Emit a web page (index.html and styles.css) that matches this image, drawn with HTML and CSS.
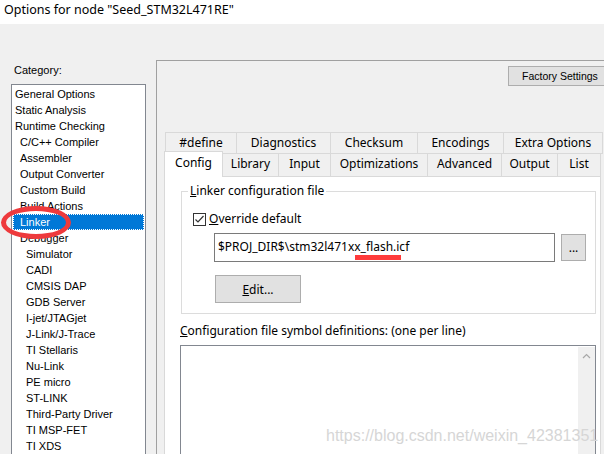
FILE: index.html
```html
<!DOCTYPE html>
<html lang="en">
<head>
    <meta charset="UTF-8">
    <title>Options for node</title>
    <link rel="stylesheet" href="styles.css">
</head>
<body>
<div class="title">Options for node "Seed_STM32L471RE"</div>
<div class="main">
    <div class="category">
        <div class="cat-label">Category:</div>
        <ul class="cat-list">
            <li>General Options</li>
            <li>Static Analysis</li>
            <li>Runtime Checking</li>
            <li class="lv1">C/C++ Compiler</li>
            <li class="lv1">Assembler</li>
            <li class="lv1">Output Converter</li>
            <li class="lv1">Custom Build</li>
            <li class="lv1">Build Actions</li>
            <li class="lv1 sel">Linker</li>
            <li class="lv1">Debugger</li>
            <li class="lv2">Simulator</li>
            <li class="lv2">CADI</li>
            <li class="lv2">CMSIS DAP</li>
            <li class="lv2">GDB Server</li>
            <li class="lv2">I-jet/JTAGjet</li>
            <li class="lv2">J-Link/J-Trace</li>
            <li class="lv2">TI Stellaris</li>
            <li class="lv2">Nu-Link</li>
            <li class="lv2">PE micro</li>
            <li class="lv2">ST-LINK</li>
            <li class="lv2">Third-Party Driver</li>
            <li class="lv2">TI MSP-FET</li>
            <li class="lv2">TI XDS</li>
        </ul>
    </div>
    <div class="panel">
        <div class="panel-top">
            <button class="btn factory">Factory Settings</button>
        </div>
        <div class="tabs">
            <div class="tab-row back">
                <div class="tab" style="width:72px">#define</div>
                <div class="tab" style="width:95px">Diagnostics</div>
                <div class="tab" style="width:88px">Checksum</div>
                <div class="tab" style="width:87px">Encodings</div>
                <div class="tab" style="width:100px">Extra Options</div>
            </div>
            <div class="tab-row front">
                <div class="tab active" style="width:59px">Config</div>
                <div class="tab" style="width:57px">Library</div>
                <div class="tab" style="width:53px">Input</div>
                <div class="tab" style="width:98px">Optimizations</div>
                <div class="tab" style="width:75px">Advanced</div>
                <div class="tab" style="width:57px">Output</div>
                <div class="tab" style="width:44px">List</div>
            </div>
            <div class="tab-page">
                <fieldset class="group">
                    <legend><u>L</u>inker configuration file</legend>
                    <div class="check-row">
                        <span class="check">
                            <svg width="11" height="11" viewBox="0 0 11 11"><path d="M1.5 5.5 L4 8 L9.5 2" fill="none" stroke="#333" stroke-width="1.2"/></svg>
                        </span>
                        <span><u>O</u>verride default</span>
                    </div>
                    <div class="path-row">
                        <div class="path">$PROJ_DIR$\stm32l471xx<span class="mark">_flash</span>.icf</div>
                        <button class="btn dots">...</button>
                    </div>
                    <button class="btn edit"><u>E</u>dit...</button>
                </fieldset>
                <div class="defs-label"><u>C</u>onfiguration file symbol definitions: (one per line)</div>
                <div class="defs-box">
                    <div class="scroll">
                        <svg width="9" height="6" viewBox="0 0 9 6"><path d="M1 5 L4.5 1.5 L8 5" fill="none" stroke="#a8a8a8" stroke-width="1.2"/></svg>
                    </div>
                </div>
            </div>
        </div>
    </div>
</div>
<div class="circle"></div>
<div class="watermark">https://blog.csdn.net/weixin_42381351</div>
</body>
</html>
```

FILE: styles.css
```css
body {
    margin: 0;
    width: 604px;
    height: 454px;
    overflow: hidden;
    position: relative;
    background-color: #f0f0f0;
    font-family: "Noto Sans", sans-serif;
    font-size: 12px;
    color: #000;
}

.title {
    height: 24px;
    background-color: #fff;
    padding-left: 4px;
    font-size: 12.5px;
    line-height: 20px;
}

.main {
    display: flex;
    align-items: flex-start;
    height: 430px;
    overflow: hidden;
}

/* left column */
.category {
    margin-left: 11px;
    margin-top: 38px;
    width: 135px;
    flex: none;
}

.cat-label {
    padding-left: 3px;
    line-height: 16px;
    font-family: "Liberation Sans", sans-serif;
    font-size: 11px;
}

.cat-list {
    list-style: none;
    margin: 6px 0 0 0;
    padding: 1px;
    height: 400px;
    background-color: #fff;
    border: 1px solid #828790;
    font-family: "Liberation Sans", sans-serif;
    font-size: 11px;
    line-height: 16px;
}

.cat-list li {
    padding-left: 2px;
    white-space: nowrap;
}

.cat-list li.lv1 {
    padding-left: 7px;
}

.cat-list li.lv2 {
    padding-left: 13px;
}

.cat-list li.sel {
    background-color: #0078d7;
    color: #fff;
    outline: 1px dotted #fff;
    outline-offset: -1px;
}

/* right panel */
.panel {
    margin-left: 10px;
    margin-top: 36px;
    width: 460px;
    height: 420px;
    flex: none;
    border: 1px solid #a0a0a0;
}

.panel-top {
    padding-top: 5px;
    padding-left: 351px;
}

.btn {
    display: block;
    box-sizing: border-box;
    margin: 0;
    padding: 0;
    background-color: #e1e1e1;
    border: 1px solid #adadad;
    font-family: "Noto Sans", sans-serif;
    font-size: 12px;
    color: #000;
}

.factory {
    width: 100px;
    height: 20px;
    padding-left: 13px;
    text-align: left;
    white-space: nowrap;
    font-family: "Liberation Sans", sans-serif;
    font-size: 10.5px;
}

.tabs {
    margin-top: 46px;
    margin-left: 7px;
}

.tab-row {
    display: flex;
    height: 22px;
}

.tab-row.back {
    margin-left: 1px;
}

.tab-row.front {
    margin-top: -1px;
    height: 24px;
}

.tab {
    box-sizing: border-box;
    flex: none;
    height: 100%;
    margin-left: -1px;
    border: 1px solid #d9d9d9;
    background-color: #f0f0f0;
    text-align: center;
    line-height: 20px;
    white-space: nowrap;
}

.tab:first-child {
    margin-left: 0;
}

.tab.active {
    position: relative;
    z-index: 1;
    height: 26px;
    margin-top: -2px;
    background-color: #fff;
    border-bottom: none;
    line-height: 21px;
}

.tab-page {
    box-sizing: border-box;
    width: 437px;
    height: 300px;
    margin-top: -1px;
    padding-top: 6px;
    background-color: #fff;
    border: 1px solid #d9d9d9;
}

.group {
    box-sizing: border-box;
    width: 415px;
    margin: 0 0 0 16px;
    padding: 0 0 10px 11px;
    border: 1px solid #dcdcdc;
}

.group legend {
    margin-left: -5px;
    padding: 0 2px;
    line-height: 16px;
}

.check-row {
    display: flex;
    align-items: center;
    gap: 3px;
    margin-top: 12px;
    line-height: 16px;
}

.check {
    box-sizing: border-box;
    width: 13px;
    height: 13px;
    display: flex;
    align-items: center;
    justify-content: center;
    background-color: #fff;
    border: 1px solid #333;
}

.path-row {
    display: flex;
    margin-top: 6px;
    margin-left: 21px;
}

.path {
    box-sizing: border-box;
    width: 341px;
    height: 29px;
    padding-left: 3px;
    line-height: 26px;
    background-color: #fff;
    border: 1px solid #7a7a7a;
}

.mark {
    position: relative;
}

.mark::after {
    content: "";
    position: absolute;
    left: -6px;
    right: -8px;
    bottom: -5px;
    height: 5px;
    background-color: #ff3b3b;
}

.dots {
    width: 25px;
    height: 27px;
    margin-left: 6px;
    margin-top: 1px;
    line-height: 20px;
}

.edit {
    width: 86px;
    height: 28px;
    margin-top: 13px;
    margin-left: 22px;
}

.defs-label {
    margin-top: 9px;
    margin-left: 15px;
    line-height: 16px;
}

.defs-box {
    box-sizing: border-box;
    width: 416px;
    height: 120px;
    margin-top: 6px;
    margin-left: 15px;
    display: flex;
    justify-content: flex-end;
    background-color: #fff;
    border: 1px solid #828790;
}

.scroll {
    width: 17px;
    margin: 1px 0;
    background-color: #f0f0f0;
    display: flex;
    justify-content: center;
    padding-top: 6px;
    box-sizing: border-box;
}

/* annotation overlays */
.circle {
    position: absolute;
    left: 1px;
    top: 206px;
    width: 70px;
    height: 33px;
    box-sizing: border-box;
    border: 5px solid #ee3a3d;
    border-radius: 50%;
}

.watermark {
    position: absolute;
    left: 326px;
    top: 427px;
    font-family: "Liberation Sans", sans-serif;
    font-size: 16px;
    color: #d6d6d6;
    white-space: nowrap;
}
```
